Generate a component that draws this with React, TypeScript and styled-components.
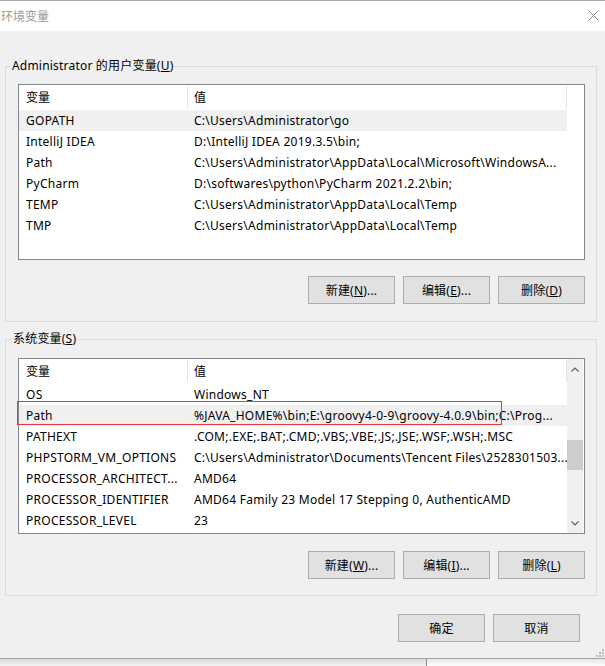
import React from "react";
import styled, { createGlobalStyle } from "styled-components";

const GlobalStyle = createGlobalStyle`
  html, body {
    margin: 0;
    padding: 0;
  }
  body {
    background: #f3f3f3;
    font-family: "Noto Sans", "Noto Sans CJK SC", sans-serif;
    font-size: 12px;
    color: #000;
  }
  * {
    box-sizing: border-box;
  }
`;

const Screen = styled.div`
  width: 605px;
  height: 666px;
  display: flex;
  flex-direction: column;
  overflow: hidden;
`;

const Window = styled.div`
  display: flex;
  flex-direction: column;
  background: #f0f0f0;
  border-top: 1px solid #a8a8a8;
  border-bottom: 1px solid #a3a3a3;
`;

const TitleBar = styled.div`
  height: 30px;
  background: #fff;
  display: flex;
  align-items: center;
  justify-content: space-between;
  padding: 0 6px 2px 1px;
`;

const Title = styled.span`
  color: #999;
  font-size: 12px;
  font-family: "Noto Sans CJK SC", sans-serif;
`;

const CloseIcon = styled.svg`
  width: 11px;
  height: 11px;
  display: block;
`;

const Body = styled.div`
  position: relative;
  display: flex;
  flex-direction: column;
  padding: 27px 8px 16px 5px;
`;

const GroupBox = styled.fieldset<{ $top: number; $bottom: number; $gap?: number }>`
  margin: ${(p) => p.$gap ?? 0}px 0 0 0;
  min-width: 0;
  border: 1px solid #dcdcdc;
  padding: ${(p) => p.$top}px 11px ${(p) => p.$bottom}px 12px;
  display: flex;
  flex-direction: column;
`;

const Legend = styled.legend<{ $shift?: number }>`
  margin-left: ${(p) => -7 + (p.$shift ?? 0)}px;
  padding: 0 1px;
  line-height: 16px;
  font-size: 12px;
  letter-spacing: 0.2px;
`;

const ListView = styled.div`
  position: relative;
  height: 176px;
  border: 1px solid #828790;
  background: #fff;
  display: flex;
`;

const ListMain = styled.div`
  width: 548px;
  display: flex;
  flex-direction: column;
`;

const HeaderRow = styled.div`
  display: grid;
  grid-template-columns: 169px 379px;
  height: 25px;
`;

const HeaderCell = styled.div<{ $pad: number }>`
  display: flex;
  align-items: center;
  padding-left: ${(p) => p.$pad}px;
  border-right: 1px solid #e5e5e5;
  margin: 1px 0 2px;
`;

const Row = styled.div<{ $selected?: boolean }>`
  display: grid;
  grid-template-columns: 169px 379px;
  height: 21px;
  background: ${(p) => (p.$selected ? "#f0f0f0" : "transparent")};
`;

const Cell = styled.div<{ $pad: number }>`
  padding-left: ${(p) => p.$pad}px;
  line-height: 21px;
  letter-spacing: 0.26px;
  white-space: nowrap;
`;

const Scrollbar = styled.div`
  width: 16px;
  margin-right: 1px;
  background: #f0f0f0;
  display: flex;
  flex-direction: column;
`;

const ArrowButton = styled.div`
  height: 20px;
  display: flex;
  align-items: center;
  justify-content: center;
`;

const Track = styled.div`
  flex: 1;
  display: flex;
  flex-direction: column;
`;

const Thumb = styled.div<{ $offset: number; $size: number }>`
  margin-top: ${(p) => p.$offset}px;
  height: ${(p) => p.$size}px;
  background: #cdcdcd;
`;

const Highlight = styled.div`
  position: absolute;
  left: -2px;
  top: 42px;
  width: 485px;
  height: 24px;
  border: 1px solid #e8383d;
  pointer-events: none;
`;

const ButtonRow = styled.div<{ $gap: number; $right?: number }>`
  display: flex;
  justify-content: flex-end;
  gap: 8px;
  margin-top: ${(p) => p.$gap}px;
  padding-right: ${(p) => p.$right ?? 0}px;
`;

const Button = styled.button`
  width: 87px;
  height: 28px;
  padding: 0;
  background: #e1e1e1;
  border: 1px solid #adadad;
  font-family: "Noto Sans", "Noto Sans CJK SC", sans-serif;
  font-size: 12px;
  letter-spacing: 0.2px;
  color: #000;
`;

const Grip = styled.svg`
  position: absolute;
  right: 1px;
  bottom: 1px;
  width: 8px;
  height: 8px;
`;

const Backdrop = styled.div`
  flex: 1;
  display: flex;
`;

const BackdropLeft = styled.div`
  width: 426px;
  background: linear-gradient(#d9d9d9, #f2f2f2);
`;

const BackdropEdge = styled.div`
  width: 1px;
  background: #8a8a8a;
`;

const BackdropRight = styled.div`
  flex: 1;
  background: linear-gradient(#e6e6e6, #fdfdfd);
`;

interface EnvVar {
  name: string;
  value: string;
  selected?: boolean;
}

const userVars: EnvVar[] = [
  { name: "GOPATH", value: "C:\\Users\\Administrator\\go", selected: true },
  { name: "IntelliJ IDEA", value: "D:\\IntelliJ IDEA 2019.3.5\\bin;" },
  { name: "Path", value: "C:\\Users\\Administrator\\AppData\\Local\\Microsoft\\WindowsA..." },
  { name: "PyCharm", value: "D:\\softwares\\python\\PyCharm 2021.2.2\\bin;" },
  { name: "TEMP", value: "C:\\Users\\Administrator\\AppData\\Local\\Temp" },
  { name: "TMP", value: "C:\\Users\\Administrator\\AppData\\Local\\Temp" },
];

const systemVars: EnvVar[] = [
  { name: "OS", value: "Windows_NT" },
  { name: "Path", value: "%JAVA_HOME%\\bin;E:\\groovy4-0-9\\groovy-4.0.9\\bin;C:\\Prog...", selected: true },
  { name: "PATHEXT", value: ".COM;.EXE;.BAT;.CMD;.VBS;.VBE;.JS;.JSE;.WSF;.WSH;.MSC" },
  { name: "PHPSTORM_VM_OPTIONS", value: "C:\\Users\\Administrator\\Documents\\Tencent Files\\2528301503..." },
  { name: "PROCESSOR_ARCHITECT...", value: "AMD64" },
  { name: "PROCESSOR_IDENTIFIER", value: "AMD64 Family 23 Model 17 Stepping 0, AuthenticAMD" },
  { name: "PROCESSOR_LEVEL", value: "23" },
];

function VarList({ vars, scroll, marked }: { vars: EnvVar[]; scroll?: boolean; marked?: boolean }) {
  return (
    <ListView>
      <ListMain>
        <HeaderRow>
          <HeaderCell $pad={7}>变量</HeaderCell>
          <HeaderCell $pad={6}>值</HeaderCell>
        </HeaderRow>
        {vars.map((v) => (
          <Row key={v.name + v.value} $selected={v.selected}>
            <Cell $pad={7}>{v.name}</Cell>
            <Cell $pad={6}>{v.value}</Cell>
          </Row>
        ))}
      </ListMain>
      {scroll && (
        <Scrollbar>
          <ArrowButton>
            <svg width="8" height="5" viewBox="0 0 8 5">
              <polyline points="0.5,4.5 4,1 7.5,4.5" fill="none" stroke="#606060" strokeWidth="1.2" />
            </svg>
          </ArrowButton>
          <Track>
            <Thumb $offset={61} $size={30} />
          </Track>
          <ArrowButton>
            <svg width="8" height="5" viewBox="0 0 8 5">
              <polyline points="0.5,0.5 4,4 7.5,0.5" fill="none" stroke="#606060" strokeWidth="1.2" />
            </svg>
          </ArrowButton>
        </Scrollbar>
      )}
      {marked && <Highlight />}
    </ListView>
  );
}

export default function App() {
  return (
    <Screen>
      <GlobalStyle />
      <Window>
        <TitleBar>
          <Title>环境变量</Title>
          <CloseIcon viewBox="0 0 11 11">
            <path d="M0.5 0.5 L10.5 10.5 M10.5 0.5 L0.5 10.5" stroke="#8a8a8a" strokeWidth="1" />
          </CloseIcon>
        </TitleBar>
        <Body>
          <GroupBox $top={10} $bottom={17}>
            <Legend>
              Administrator 的用户变量(<u>U</u>)
            </Legend>
            <VarList vars={userVars} />
            <ButtonRow $gap={16}>
              <Button>
                新建(<u>N</u>)...
              </Button>
              <Button>
                编辑(<u>E</u>)...
              </Button>
              <Button>
                删除(<u>D</u>)
              </Button>
            </ButtonRow>
          </GroupBox>
          <GroupBox $top={11} $bottom={16} $gap={9}>
            <Legend $shift={1}>
              系统变量(<u>S</u>)
            </Legend>
            <VarList vars={systemVars} scroll marked />
            <ButtonRow $gap={17}>
              <Button>
                新建(<u>W</u>)...
              </Button>
              <Button>
                编辑(<u>I</u>)...
              </Button>
              <Button>
                删除(<u>L</u>)
              </Button>
            </ButtonRow>
          </GroupBox>
          <ButtonRow $gap={18} $right={17}>
            <Button>确定</Button>
            <Button>取消</Button>
          </ButtonRow>
          <Grip viewBox="0 0 8 8">
            {[
              [6, 0],
              [6, 3],
              [3, 3],
              [6, 6],
              [3, 6],
              [0, 6],
            ].map(([x, y]) => (
              <rect key={`${x}-${y}`} x={x} y={y} width="2" height="2" fill="#bcbcbc" />
            ))}
          </Grip>
        </Body>
      </Window>
      <Backdrop>
        <BackdropLeft />
        <BackdropEdge />
        <BackdropRight />
      </Backdrop>
    </Screen>
  );
}
